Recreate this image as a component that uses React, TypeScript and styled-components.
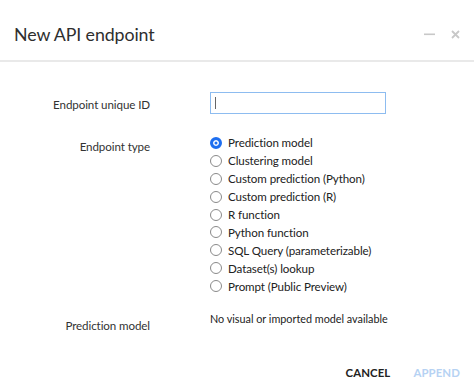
import React, { FC, useState } from 'react';
import styled, { createGlobalStyle, css } from 'styled-components';

const GlobalStyle = createGlobalStyle`
  html, body {
    margin: 0;
    padding: 0;
    background: #fff;
  }
  body {
    font-family: 'Lato', 'Noto Sans', sans-serif;
    color: #333;
  }
`;

const Dialog = styled.div`
  width: 474px;
  height: 389px;
  display: flex;
  flex-direction: column;
  background: #fff;
`;

const Header = styled.header`
  height: 60px;
  display: flex;
  align-items: center;
  justify-content: space-between;
  padding: 0 14px 0 14px;
  border-bottom: 2px solid #e9e9e9;
  box-sizing: content-box;
`;

const Title = styled.h1`
  margin: 0;
  padding-top: 8px;
  font-size: 17.8px;
  font-weight: 400;
  color: #2e2e2e;
  letter-spacing: -0.1px;
`;

const HeaderActions = styled.div`
  display: flex;
  align-items: center;
  gap: 16px;
  padding-top: 8px;
  color: #c8c8c8;
`;

const IconButton = styled.button`
  border: none;
  background: none;
  padding: 0;
  display: flex;
  color: inherit;
  cursor: pointer;
`;

const Body = styled.div`
  flex: 1;
  display: grid;
  grid-template-columns: 150px 1fr;
  column-gap: 60px;
  align-content: start;
  padding-top: 30px;
`;

const Label = styled.label<{ $offset?: number }>`
  justify-self: end;
  font-size: 11.6px;
  letter-spacing: -0.1px;
  color: #333;
  padding-top: ${(p) => p.$offset ?? 0}px;
`;

const Field = styled.div<{ $gap?: number }>`
  margin-bottom: ${(p) => p.$gap ?? 0}px;
`;

const TextInput = styled.input`
  width: 176px;
  height: 22px;
  box-sizing: border-box;
  border: 1.5px solid #8dbcf0;
  outline: none;
  padding: 0 4px;
  font-family: inherit;
  font-size: 13px;
  caret-color: #555;
`;

const Caret = styled.span`
  display: inline-block;
  width: 1px;
  height: 12px;
  margin: 3.5px 0 0 1px;
  background: #666;
`;

const InputWrap = styled.div`
  position: relative;
  width: 176px;
  height: 22px;

  ${Caret} {
    position: absolute;
    left: 4px;
    top: 1px;
  }
`;

const RadioList = styled.div`
  display: flex;
  flex-direction: column;
`;

const RadioRow = styled.label`
  display: flex;
  align-items: center;
  gap: 6px;
  height: 17.9px;
  font-size: 11.6px;
  letter-spacing: -0.1px;
  color: #222;
  cursor: pointer;
`;

const Radio = styled.input.attrs({ type: 'radio' })`
  appearance: none;
  margin: 0;
  width: 12px;
  height: 12px;
  border-radius: 50%;
  border: 1px solid #8a8a8a;
  background: #fff;
  box-sizing: border-box;

  &:checked {
    border: 3px solid #1e6ff0;
    background: #1e6ff0;
    box-shadow: inset 0 0 0 1.5px #fff;
  }
`;

const Note = styled.div`
  font-size: 10.8px;
  color: #222;
  margin-top: -5px;
`;

const Footer = styled.footer`
  display: flex;
  justify-content: flex-end;
  align-items: center;
  gap: 23px;
  padding: 0 14px 10px 0;
`;

const TextButton = styled.button<{ $disabled?: boolean }>`
  border: none;
  background: none;
  padding: 0;
  font-family: inherit;
  font-size: 11.4px;
  font-weight: 700;
  letter-spacing: 0.1px;
  color: #222;
  cursor: pointer;

  ${(p) =>
    p.$disabled &&
    css`
      color: #b6d2f3;
      cursor: default;
    `}
`;

const types = [
  'Prediction model',
  'Clustering model',
  'Custom prediction (Python)',
  'Custom prediction (R)',
  'R function',
  'Python function',
  'SQL Query (parameterizable)',
  'Dataset(s) lookup',
  'Prompt (Public Preview)',
];

const App: FC = () => {
  const [type, setType] = useState(types[0]);

  return (
    <>
      <GlobalStyle />
      <Dialog>
        <Header>
          <Title>New API endpoint</Title>
          <HeaderActions>
            <IconButton aria-label="minimize">
              <svg width="11" height="10" viewBox="0 0 11 10">
                <rect x="0" y="4.5" width="11" height="1.6" fill="currentColor" />
              </svg>
            </IconButton>
            <IconButton aria-label="close">
              <svg width="9" height="9" viewBox="0 0 9 9">
                <path d="M1 1 L8 8 M8 1 L1 8" stroke="currentColor" strokeWidth="1.8" />
              </svg>
            </IconButton>
          </HeaderActions>
        </Header>

        <Body>
          <Label $offset={6}>Endpoint unique ID</Label>
          <Field $gap={20}>
            <InputWrap>
              <TextInput id="endpoint-id" />
              <Caret />
            </InputWrap>
          </Field>

          <Label $offset={6}>Endpoint type</Label>
          <Field $gap={22}>
            <RadioList>
              {types.map((t) => (
                <RadioRow key={t}>
                  <Radio name="type" checked={type === t} onChange={() => setType(t)} />
                  {t}
                </RadioRow>
              ))}
            </RadioList>
          </Field>

          <Label $offset={2}>Prediction model</Label>
          <Field>
            <Note>No visual or imported model available</Note>
          </Field>
        </Body>

        <Footer>
          <TextButton>CANCEL</TextButton>
          <TextButton $disabled>APPEND</TextButton>
        </Footer>
      </Dialog>
    </>
  );
};

export default App;
